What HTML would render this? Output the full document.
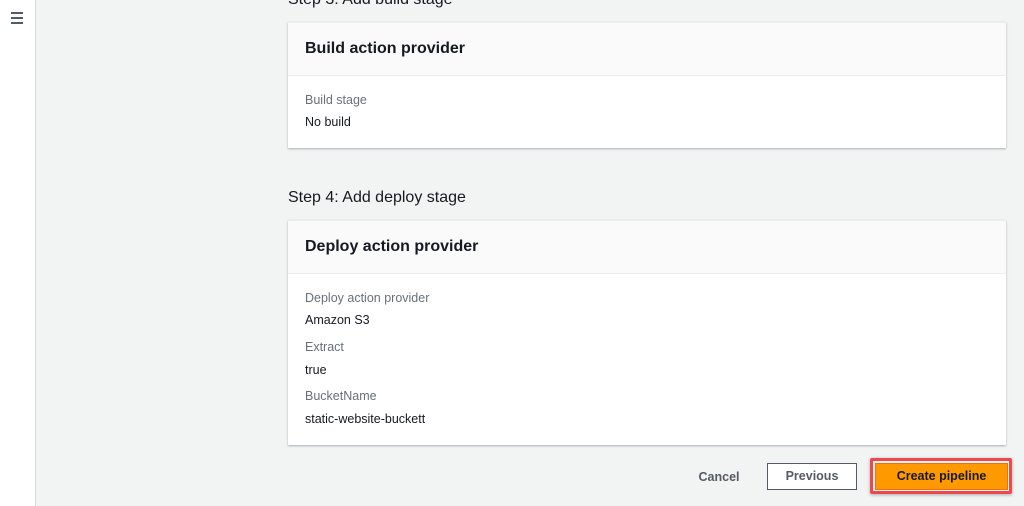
<!DOCTYPE html>
<html><head><style>
*{margin:0;padding:0;box-sizing:border-box}
body{width:1024px;height:506px;overflow:hidden;background:#f2f3f3;font-family:"Liberation Sans",sans-serif;color:#16191f;position:relative}
.side{position:absolute;left:0;top:0;width:36px;height:506px;background:#fff;border-right:1px solid #d5dbdb}
.ham{position:absolute;left:11px;top:12px;width:12px}
.ham i{display:block;height:2px;background:#545b64;margin-bottom:3px}
.h{position:absolute;left:288px;font-size:16px;color:#16191f}
.card{position:absolute;left:288px;width:718px;background:#fff;box-shadow:0 1px 2px rgba(0,22,40,.3);border-top:1px solid #eaeded}
.card .hd{background:#fafafa;border-bottom:1px solid #eaeded;height:53px;padding:17px 17px;font-weight:bold;font-size:16px}
.lb{position:absolute;left:17px;font-size:12.5px;color:#687078}
.v{position:absolute;left:17px;font-size:12.5px;color:#16191f}
.btn{position:absolute;font-size:12.5px;font-weight:bold;text-align:center}
</style></head><body>
<div class="side"><div class="ham"><i></i><i></i><i></i></div></div>
<div class="h" style="top:-9px">Step 3: Add build stage</div>
<div class="card" style="top:22px;height:126px"><div class="hd">Build action provider</div>
<div class="lb" style="top:70px">Build stage</div><div class="v" style="top:92px">No build</div></div>
<div class="h" style="top:189px">Step 4: Add deploy stage</div>
<div class="card" style="top:220px;height:225px"><div class="hd">Deploy action provider</div>
<div class="lb" style="top:70px">Deploy action provider</div><div class="v" style="top:92px">Amazon S3</div>
<div class="lb" style="top:119px">Extract</div><div class="v" style="top:142px">true</div>
<div class="lb" style="top:168px">BucketName</div><div class="v" style="top:191px">static-website-buckett</div></div>
<div class="btn" style="left:689px;top:470px;width:60px;color:#545b64">Cancel</div>
<div class="btn" style="left:767px;top:463px;width:90px;height:27px;border:1px solid #545b64;background:#fff;color:#545b64;line-height:25px">Previous</div>
<div style="position:absolute;left:870px;top:458px;width:142px;height:36px;border:3px solid #f0464e;border-radius:2px;box-shadow:0 1px 3px rgba(0,0,0,.3)"></div>
<div class="btn" style="left:875px;top:463px;width:133px;height:27px;background:#ff9900;border:1px solid #ec7211;color:#16191f;line-height:25px">Create pipeline</div>
</body></html>
